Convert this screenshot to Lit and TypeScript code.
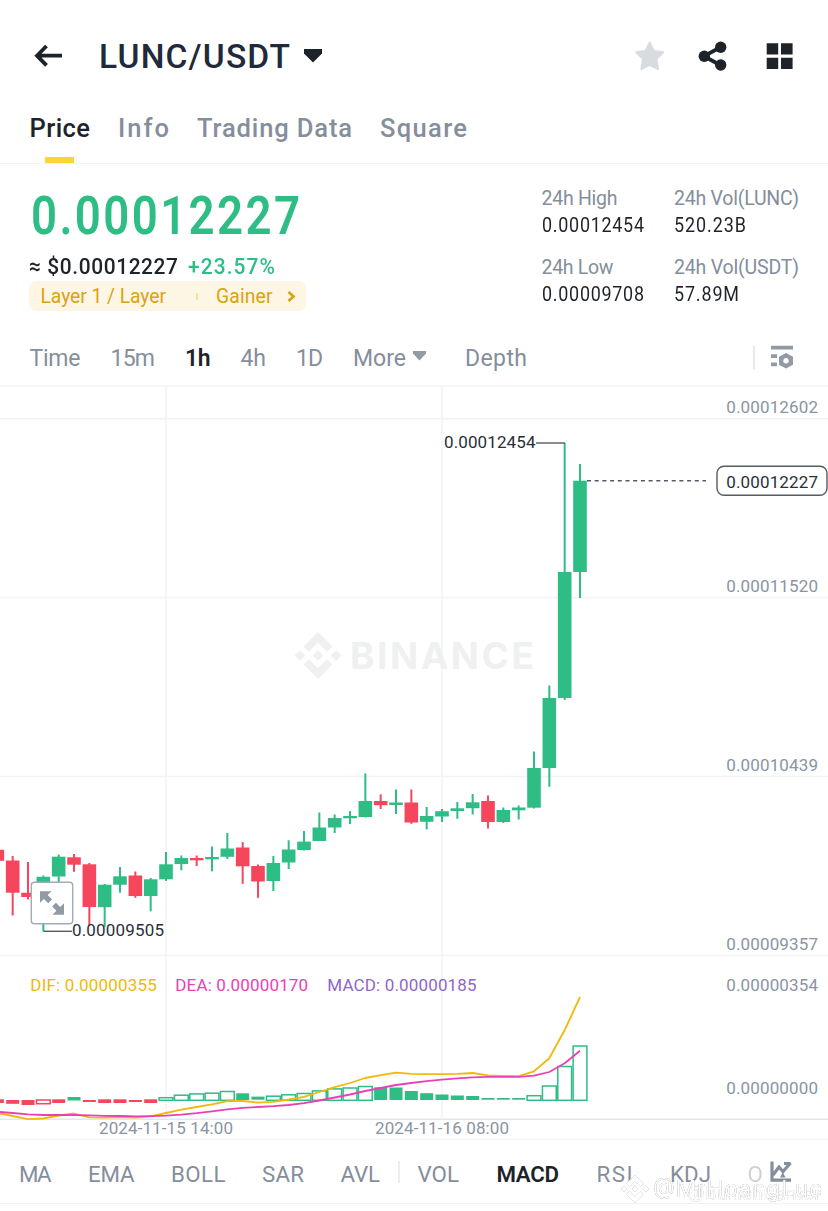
import { LitElement, html, svg, css } from "lit";
import { customElement, property, query } from "lit/decorators.js";

/** Single-line text tracked so that it fills a given width; sx condenses the glyphs. */
@customElement("fit-text")
class FitText extends LitElement {
  static styles = css`
    :host { display: inline-block; white-space: pre; flex: none; }
    span { display: inline-block; transform-origin: 0 50%; }
  `;
  @property() text = "";
  @property({ type: Number }) w = 0;
  @property({ type: Number }) sx = 1;
  @query("span") label!: HTMLSpanElement;

  render() {
    return html`<span>${this.text}</span>`;
  }

  updated() {
    this.label.style.transform = "none";
    this.label.style.letterSpacing = "0px";
    const natural = this.label.getBoundingClientRect().width;
    const gap = (this.w / this.sx - natural) / Math.max(1, this.text.length - 1);
    this.label.style.letterSpacing = gap.toFixed(3) + "px";
    if (this.sx !== 1) this.label.style.transform = `scaleX(${this.sx})`;
    this.style.width = this.w + "px";
  }
}

const STEP = 15.333;
const LAST_X = 580;
const xAt = (i: number) => LAST_X - i * STEP;

type Candle = [dir: "g" | "r", high: number, low: number, top: number, bottom: number];
/* newest candle first */
const candles: Candle[] = [
  ["g", 464, 598, 480.7, 572], ["g", 443, 700, 572, 698], ["g", 685.5, 786.8, 698, 768],
  ["g", 751.5, 808.5, 768, 807.7], ["g", 805.5, 819.5, 807.5, 810.3], ["g", 807.5, 823, 810, 822],
  ["r", 795.5, 828.5, 801, 822], ["g", 794, 814.5, 802.3, 808.2], ["g", 802, 818.8, 808.3, 811],
  ["g", 809, 822, 811.2, 816.5], ["g", 807, 829.3, 816, 821.8], ["r", 789.5, 823.8, 802.5, 822.5],
  ["g", 789.5, 814, 802.5, 805], ["r", 794.3, 809, 801, 805.2], ["g", 773.5, 817.5, 801, 817],
  ["g", 811, 824, 816, 818.3], ["g", 814.5, 833, 818, 827.5], ["g", 812.5, 841, 827.5, 841],
  ["g", 831, 850.5, 841.6, 850], ["g", 840.3, 869, 849.5, 862.5], ["g", 856, 891, 863, 881],
  ["r", 864.5, 897.8, 866, 881.5], ["r", 842, 883.8, 847.5, 866.3], ["g", 833, 859, 848.5, 856.8],
  ["g", 846.5, 871.3, 857, 859.3], ["r", 855.5, 866, 858, 860.3], ["g", 855.5, 870.3, 858, 864],
  ["g", 852, 881, 864.3, 879.3], ["g", 878, 911.3, 879.3, 896], ["r", 871.5, 897.8, 875.5, 896],
  ["g", 867, 892.7, 876.3, 884.7], ["g", 884, 927, 884.7, 907.2], ["r", 863, 925, 864.3, 907],
  ["r", 854, 871.8, 857.3, 864.7], ["g", 854.5, 890, 856.7, 876.5], ["g", 875.5, 931.5, 876.8, 890],
  ["r", 862, 899.5, 892.8, 897], ["r", 856, 915.5, 860.5, 892.7], ["r", 849.8, 860.8, 849.8, 860.8],
];

/* g/r filled, G/R outlined; newest first: [kind, top, bottom] */
const bars: [string, number, number][] = [
  ["G", 1046, 1100.3], ["G", 1066.5, 1100.3], ["G", 1086, 1100.3], ["G", 1095.7, 1100.3],
  ["g", 1098, 1099.7], ["g", 1098, 1099.7], ["g", 1098, 1099.7], ["g", 1096, 1100],
  ["g", 1095.5, 1100], ["g", 1094.5, 1100], ["g", 1093.2, 1100], ["g", 1091, 1100],
  ["g", 1087.5, 1100], ["g", 1087.3, 1100], ["G", 1086.5, 1100.3], ["G", 1088, 1100.3],
  ["G", 1088.9, 1100.3], ["G", 1090.9, 1100.3], ["G", 1093.5, 1100.3], ["G", 1094.8, 1100.3],
  ["G", 1096.2, 1100.3], ["g", 1096.6, 1099.7], ["g", 1093.3, 1100], ["G", 1091.5, 1100.3],
  ["G", 1093.2, 1100.3], ["G", 1093.9, 1100.3], ["G", 1095.2, 1100.3], ["G", 1097.7, 1100.3],
  ["r", 1099.3, 1103], ["r", 1100, 1102], ["r", 1099.3, 1103], ["r", 1099.3, 1103],
  ["r", 1100, 1102], ["g", 1097, 1100.5], ["r", 1099.3, 1103], ["R", 1100, 1103.7],
  ["r", 1100, 1105], ["r", 1100, 1103.8], ["r", 1099.3, 1103],
];

const dif = [997, 1030, 1058.3, 1071.3, 1076.2, 1075.8, 1075.3, 1073, 1073.8, 1074.2, 1074.2, 1073.8,
  1072.7, 1075.2, 1078, 1083, 1087.2, 1092, 1096.8, 1099.5, 1101.8, 1102.6, 1101, 1101.2, 1104.3, 1107,
  1109.7, 1113, 1116.3, 1117.7, 1117, 1117.6, 1117.4, 1113.5, 1115.5, 1118.5, 1119.2, 1116, 1113];
const dea = [1050.7, 1063.3, 1072, 1075.7, 1076.8, 1076.8, 1076.8, 1077.3, 1078.4, 1079.7, 1081.2, 1083,
  1085, 1088, 1091, 1094.5, 1097.5, 1100.5, 1103.2, 1105, 1106.2, 1107, 1107.8, 1109.3, 1111.3, 1113.2,
  1114.7, 1115.7, 1116.2, 1116.4, 1116, 1115.8, 1115.3, 1115, 1115, 1115, 1114.3, 1113, 1111.8];
const points = (ys: number[]) => ys.map((y, i) => `${xAt(i).toFixed(1)},${y}`).join(" ");

const LOGO = "M38.73 53.2l24.59-24.58 24.6 24.6 14.3-14.31L63.32 0 24.42 38.9zM0 63.31l14.3-14.31 14.31 14.31-14.31 14.3zM38.73 73.41l24.59 24.59 24.6-24.6 14.31 14.29-38.9 38.91-38.91-38.88zM98 63.31l14.3-14.31 14.31 14.3-14.31 14.32zM77.83 63.3L63.32 48.78 48.81 63.28l14.51 14.5z";

@customElement("price-chart")
class PriceChart extends LitElement {
  static styles = css`
    :host { display: block; height: 755px; }
    svg { display: block; font: 17px Roboto, "Liberation Sans", sans-serif; }
    .grid { stroke: #f2f3f5; stroke-width: 1.5; }
    .axis { stroke: #e4e6ec; stroke-width: 1.5; }
    .muted { fill: #8a94a2; }
    .dark { fill: #2b3038; }
    .lead { stroke: #555b65; stroke-width: 1.4; fill: none; }
    .g { fill: #2ebd85; }
    .r { fill: #f6465d; }
    .G { fill: #fff; stroke: #2ebd85; stroke-width: 1.5; }
    .R { fill: #fff; stroke: #f6465d; stroke-width: 1.5; }
    .dif { fill: none; stroke: #f0b90b; stroke-width: 1.8; stroke-linejoin: round; }
    .dea { fill: none; stroke: #eb40b5; stroke-width: 1.8; stroke-linejoin: round; }
    .difText { fill: #f0b90b; }
    .deaText { fill: #eb40b5; }
    .macdText { fill: #9065ca; }
    .mark { fill: #eff1f1; }
    .brand { font: 700 37px Inter, sans-serif; }
    .tag { fill: #fff; stroke: #555b65; stroke-width: 1.4; }
    .button { fill: #fff; stroke: #a3abb8; stroke-width: 1.4; }
    .arrows { fill: #929aa5; }
  `;

  label(x: number, y: number, w: number, text: string, cls: string) {
    return svg`<text class=${cls} x=${x} y=${y} textLength=${w}>${text}</text>`;
  }

  render() {
    const rows: [number, string][] = [
      [413, "0.00012602"], [592, "0.00011520"], [770.6, "0.00010439"],
      [949.8, "0.00009357"], [991, "0.00000354"], [1094, "0.00000000"],
    ];
    return html`<svg width="828" height="755" viewBox="0 385 828 755">
      ${[386, 418.7, 597.6, 776.6, 955.4, 1139.6].map((y) => svg`<path class="grid" d="M0 ${y}H828" />`)}
      <path class="grid" d="M166 386V1118M442 386V1118" />
      <path class="axis" d="M0 1119.3H828" />
      <path class="mark" transform="translate(294.5 632) scale(.371)" d=${LOGO} />
      <text class="mark brand" x="350" y="669" textLength="184">BINANCE</text>
      ${candles.map(([dir, high, low, top, bottom], i) => svg`
        <rect class=${dir} x=${xAt(i) - 1} y=${high} width="2" height=${low - high} />
        <rect class=${dir} x=${xAt(i) - 6.8} y=${top} width="13.6" height=${bottom - top} />`)}
      ${bars.map(([kind, top, bottom], i) => {
        const outlined = kind === "G" || kind === "R";
        return svg`<rect class=${kind} x=${xAt(i) - (outlined ? 6.9 : 6.5)} y=${top}
          width=${outlined ? 13.8 : 13} height=${bottom - top} />`;
      })}
      <polyline class="dif" points=${points(dif)} />
      <polyline class="dea" points=${points(dea)} />
      <path class="lead" d="M536 443H565" />
      <path class="lead" stroke-dasharray="4 3.7" d="M587 480.8H706" />
      <rect class="tag" x="717" y="466.3" width="110" height="29" rx="7" />
      ${rows.map(([y, t]) => this.label(726.3, y, 91.7, t, "muted"))}
      ${this.label(726.3, 487.5, 91.7, "0.00012227", "dark")}
      ${this.label(444, 447.8, 91.5, "0.00012454", "dark")}
      <rect class="button" x="31.3" y="882.3" width="41.4" height="41.4" rx="3" />
      <path class="arrows" d="M40 891.3h11.5l-3.8 3.8 4.3 4.3-3.8 3.8-4.3-4.3-3.9 3.9zM64 914.7v-11.5l-3.8 3.8-4.3-4.3-3.8 3.8 4.3 4.3-3.9 3.9z" />
      <path class="lead" d="M43.5 931.3H72" />
      ${this.label(72, 936, 92, "0.00009505", "dark")}
      ${this.label(30.3, 991.2, 126.5, "DIF: 0.00000355", "difText")}
      ${this.label(175.3, 991.2, 132.8, "DEA: 0.00000170", "deaText")}
      ${this.label(327.3, 991.2, 149.3, "MACD: 0.00000185", "macdText")}
      ${this.label(99, 1134.4, 134, "2024-11-15 14:00", "muted")}
      ${this.label(375, 1134.4, 134, "2024-11-16 08:00", "muted")}
    </svg>`;
  }
}

@customElement("app-root")
class AppRoot extends LitElement {
  static styles = css`
    :host { display: block; position: relative; width: 828px; height: 1211px; overflow: hidden;
      background: #fff; color: #1e2329; font-family: Roboto, "Liberation Sans", sans-serif; }
    svg { display: block; flex: none; }
    header { display: flex; align-items: center; height: 112px; padding: 0 33px 0 34px; box-sizing: border-box; }
    .title { margin: 1px 0 0 36px; font-size: 33.5px; font-weight: 500; color: #202a3b; }
    .caret { margin-left: 14px; }
    .actions { display: flex; align-items: center; gap: 32.5px; margin-left: auto; }
    .tabs { display: flex; gap: 28px; height: 51.5px; padding-left: 29.5px; box-sizing: border-box;
      border-bottom: 1.5px solid #f3f3f4; font-size: 25.5px; line-height: 33px; font-weight: 500; color: #848e9c; }
    .tab { display: flex; flex-direction: column; align-items: center; height: 51px; }
    .active { color: #1e2329; }
    .bar { width: 29px; height: 6px; margin-top: 12px; background: #fcd535; }
    .info { display: flex; height: 148px; padding-left: 29px; }
    .main { width: 512.5px; padding-top: 26.500px; }
    .price { display: block; height: 52px; margin: 0 0 9px 2px; line-height: 52px; font-size: 53px;
      font-weight: 600; color: #2ebd85; }
    .usd { display: flex; gap: 10px; line-height: 30px; font-size: 22.5px; font-weight: 500; }
    .up { color: #2ebd85; }
    .chip { display: flex; align-items: center; width: 277px; height: 30px; padding: 1px 0 0 11.500px;
      box-sizing: border-box; border-radius: 7px; background: #fef6e4; color: #d9a30e; font-size: 19.3px; }
    .chipline { width: 2px; height: 7px; margin: 0 18px 0 30px; background: #f6e2a6; }
    .chev { margin-left: 14px; }
    .stats { display: grid; grid-template-columns: 132.500px auto; row-gap: 17px; align-content: start;
      padding-top: 22.500px; font-size: 19.5px; line-height: 26px; }
    .stat { display: flex; flex-direction: column; gap: 1px; height: 52px; color: #1e2329; }
    .key { color: #848e9c; }
    .intervals { display: flex; align-items: center; height: 55px; margin-top: 18.500px; padding: 1px 0 0 29.500px;
      box-sizing: border-box; font-size: 23px; color: #848e9c; }
    .strong { color: #1e2329; font-weight: 600; }
    .m30 { margin-left: 30px; }
    .depth { margin-left: 25px; }
    .rule { width: 1.5px; height: 23px; margin: -1px 0 0 226px; background: #e6e8eb; }
    .set { margin: -3px 0 0 15.500px; }
    .indicators { display: flex; align-items: center; height: 64px; padding: 4px 0 0 19px; box-sizing: border-box;
      border-bottom: 1.5px solid #f3f3f4; font-size: 22.3px; color: #848e9c; }
    .m36 { margin-left: 36.500px; }
    .m37 { margin-left: 37.500px; }
    .split { width: 1.5px; height: 22px; margin: -4px 18px 0; background: #eceef0; }
    .fade { opacity: .4; }
    .tool { margin: -4px 0 0 7px; }
    .overlay { position: absolute; left: 610px; top: 1165px; }
    .overlay path { filter: drop-shadow(0 .8px .6px #888); }
    .overlay text { font: 22.5px Inter, sans-serif; fill: #fff; filter: drop-shadow(0 .8px .6px #777); }
    .overlay .back { font-size: 18px; opacity: .7; }
  `;

  render() {
    const stat = (key: string, kw: number, value: string, vw: number) => html`
      <div class="stat"><fit-text class="key" text=${key} w=${kw}></fit-text>
        <fit-text text=${value} w=${vw} sx=".92"></fit-text></div>`;
    return html`
      <header>
        <svg width="29" height="24" viewBox="34 44 29 24" fill="none" stroke="#1e2329" stroke-width="3.8">
          <path d="M62 55.7H37M46.5 46L37 55.7l9.5 9.7" /></svg>
        <fit-text class="title" text="LUNC/USDT" w="191"></fit-text>
        <svg class="caret" width="18" height="14" viewBox="0 0 18 14"><path fill="#1e2329" d="M0 0h18v4.5L9 13.5 0 4.5z" /></svg>
        <div class="actions">
          <svg width="30" height="30" viewBox="635 41 30 30"><path fill="#d8dce1" stroke="#d8dce1" stroke-width="2" stroke-linejoin="round"
            d="M649.7 42.5l4.1 8.5 9.4 1.2-6.8 6.7 1.7 10.3-8.4-4.3-8.4 4.3 1.7-10.3-6.8-6.7 9.4-1.2z" /></svg>
          <svg width="30" height="32" viewBox="697 39 30 32" fill="#1e2329">
            <circle cx="703.3" cy="55.2" r="5.7" /><circle cx="719.7" cy="46.3" r="5.7" /><circle cx="719.7" cy="64" r="5.7" />
            <path d="M719 46.5L703 55.2l16 8.8" fill="none" stroke="#1e2329" stroke-width="3.8" /></svg>
          <svg width="35" height="27" viewBox="760 42 35 27" fill="#1e2329">
            <path d="M766.7 42.3h11.5v11.3h-11.5zM781 42.3h11.6v11.3H781zM766.7 56.8h11.5V68h-11.5zM781 56.8h11.6V68H781z" /></svg>
        </div>
      </header>
      <nav class="tabs">
        <div class="tab active"><fit-text text="Price" w="60.5"></fit-text><div class="bar"></div></div>
        <div class="tab"><fit-text text="Info" w="51"></fit-text></div>
        <div class="tab"><fit-text text="Trading Data" w="155"></fit-text></div>
        <div class="tab"><fit-text text="Square" w="87"></fit-text></div>
      </nav>
      <section class="info">
        <div class="main">
          <fit-text class="price" text="0.00012227" w="269" sx=".86"></fit-text>
          <div class="usd"><fit-text text="≈ $0.00012227" w="149" sx=".93"></fit-text>
            <fit-text class="up" text="+23.57%" w="87" sx=".93"></fit-text></div>
          <div class="chip"><fit-text text="Layer 1 / Layer" w="125.5"></fit-text><div class="chipline"></div>
            <fit-text text="Gainer" w="56.5"></fit-text>
            <svg class="chev" width="9" height="11" viewBox="0 0 9 11"><path d="M1.5 1l5 4.5-5 4.5" fill="none" stroke="#d9a30e" stroke-width="2.6" /></svg></div>
        </div>
        <div class="stats">
          ${stat("24h High", 76, "0.00012454", 102)} ${stat("24h Vol(LUNC)", 125, "520.23B", 72)}
          ${stat("24h Low", 72, "0.00009708", 102)} ${stat("24h Vol(USDT)", 125, "57.89M", 65)}
        </div>
      </section>
      <nav class="intervals">
        <fit-text text="Time" w="51"></fit-text>
        <fit-text class="m30" text="15m" w="44.5"></fit-text>
        <fit-text class="m30 strong" text="1h" w="25.5"></fit-text>
        <fit-text class="m30" text="4h" w="25.5"></fit-text>
        <fit-text class="m30" text="1D" w="27"></fit-text>
        <fit-text class="m30" text="More" w="53"></fit-text>
        <svg width="34" height="15" viewBox="0 0 34 15"><path fill="#929aa5" d="M7 0h13v2.500L13.500 9.500 7 2.500z" /></svg>
        <fit-text class="depth" text="Depth" w="62"></fit-text>
        <div class="rule"></div>
        <svg class="set" width="23" height="24" viewBox="770 344.500 23 24" fill="#929aa5">
          <path d="M771 345.300h22v3.700h-22zM771 353.700h6v3.700h-6zM771 362h6v3.700h-6z" />
          <path fill-rule="evenodd" d="M786 352.500l7 3.800v8l-7 3.800-7-3.800v-8zM786 357.500a2.800 2.800 0 1 0 .01 0z" /></svg>
      </nav>
      <price-chart></price-chart>
      <nav class="indicators">
        <fit-text text="MA" w="32.5"></fit-text>
        <fit-text class="m36" text="EMA" w="46.5"></fit-text>
        <fit-text class="m36" text="BOLL" w="54.5"></fit-text>
        <fit-text class="m36" text="SAR" w="42"></fit-text>
        <fit-text class="m36" text="AVL" w="39.5"></fit-text>
        <div class="split"></div>
        <fit-text text="VOL" w="41.5"></fit-text>
        <fit-text class="strong m37" text="MACD" w="62.5"></fit-text>
        <fit-text class="m37" text="RSI" w="36"></fit-text>
        <fit-text class="m37" text="KDJ" w="41"></fit-text>
        <fit-text class="fade m36" text="O" w="15"></fit-text>
        <svg class="tool" width="22" height="22" viewBox="771 1161.500 22 22">
          <path d="M773 1162v18.700h19M774 1175.500l6-8 4 4.500 7.500-8.500M785 1164h6.500" fill="none" stroke="#848e9c" stroke-width="3.200" />
          <path d="M781 1178l2.800-5 2.800 5z" fill="#848e9c" /></svg>
      </nav>
      <svg class="overlay" width="218" height="46" viewBox="610 1165 218 46">
        <path fill="#fff" transform="translate(621 1175) scale(.22)" d=${LOGO} />
        <text class="back" x="687" y="1200" textLength="134">@BullishBanter</text>
        <text x="653" y="1197" textLength="169">@MrHoangLuc</text>
      </svg>`;
  }
}
